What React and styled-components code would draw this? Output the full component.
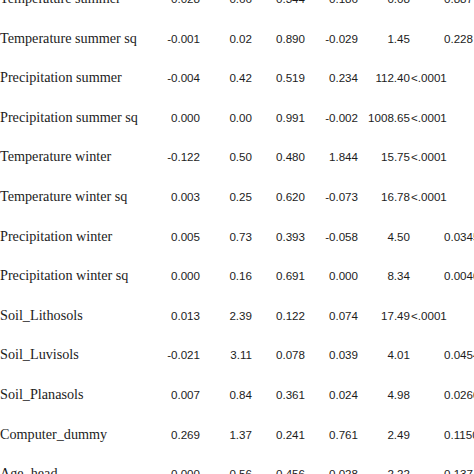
import React from 'react';
import styled, { createGlobalStyle } from 'styled-components';

const GlobalStyle = createGlobalStyle`
  html, body {
    margin: 0;
    padding: 0;
    background: #ffffff;
    overflow: hidden;
  }
`;

const StyledTable = styled.div`
  width: 474px;
  height: 474px;
  overflow: hidden;
  background: #ffffff;
  color: #1c1c1c;

  .rows {
    margin-top: -21px;
  }
`;

const Row = styled.div`
  display: grid;
  grid-template-columns: 145px 55px 52px 53px 53px 52px 1fr;
  align-items: baseline;
  height: 39.6px;
  line-height: 39.6px;
  white-space: nowrap;
`;

const Label = styled.span`
  font-family: 'Liberation Serif', 'Times New Roman', serif;
  font-size: 14.2px;
`;

const Num = styled.span`
  text-align: right;
  font-family: 'Liberation Sans', Arial, sans-serif;
  font-size: 11.6px;
`;

const PValue = styled.span`
  padding-left: ${({ $tight }) => ($tight ? '1px' : '34px')};
  font-family: 'Liberation Sans', Arial, sans-serif;
  font-size: 11.6px;
`;

const data = [
  ['Temperature summer', '0.028', '0.66', '0.344', '0.186', '0.08', '0.887'],
  ['Temperature summer sq', '-0.001', '0.02', '0.890', '-0.029', '1.45', '0.228'],
  ['Precipitation summer', '-0.004', '0.42', '0.519', '0.234', '112.40', '<.0001'],
  ['Precipitation summer sq', '0.000', '0.00', '0.991', '-0.002', '1008.65', '<.0001'],
  ['Temperature winter', '-0.122', '0.50', '0.480', '1.844', '15.75', '<.0001'],
  ['Temperature winter sq', '0.003', '0.25', '0.620', '-0.073', '16.78', '<.0001'],
  ['Precipitation winter', '0.005', '0.73', '0.393', '-0.058', '4.50', '0.0345'],
  ['Precipitation winter sq', '0.000', '0.16', '0.691', '0.000', '8.34', '0.0040'],
  ['Soil_Lithosols', '0.013', '2.39', '0.122', '0.074', '17.49', '<.0001'],
  ['Soil_Luvisols', '-0.021', '3.11', '0.078', '0.039', '4.01', '0.0454'],
  ['Soil_Planasols', '0.007', '0.84', '0.361', '0.024', '4.98', '0.0260'],
  ['Computer_dummy', '0.269', '1.37', '0.241', '0.761', '2.49', '0.1150'],
  ['Age_head', '0.000', '0.56', '0.456', '0.028', '2.22', '0.1374'],
];

const App = () => (
  <StyledTable>
    <GlobalStyle />
    <div className="rows">
      {data.map(([label, ...nums]) => {
        const p = nums[nums.length - 1];
        return (
          <Row key={label}>
            <Label>{label}</Label>
            {nums.slice(0, 5).map((n, i) => (
              <Num key={i}>{n}</Num>
            ))}
            <PValue $tight={p.startsWith('<')}>{p}</PValue>
          </Row>
        );
      })}
    </div>
  </StyledTable>
);

export default App;
